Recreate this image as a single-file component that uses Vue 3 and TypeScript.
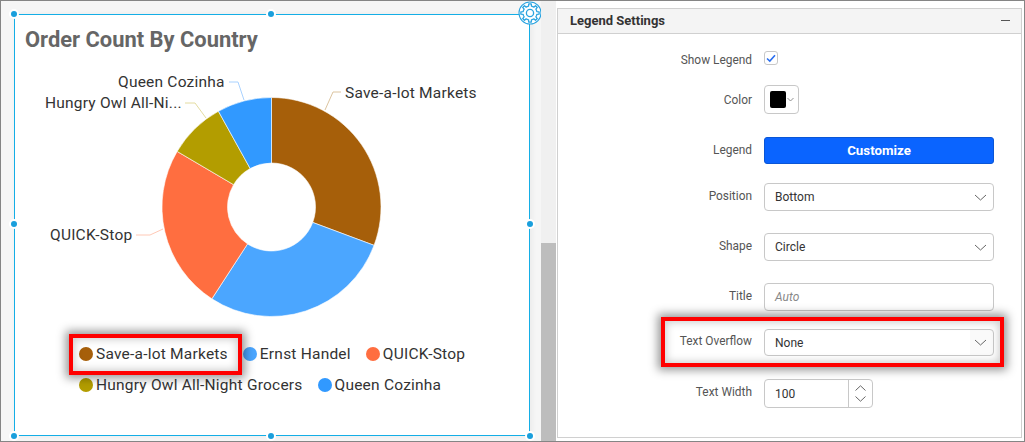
<script setup lang="ts">
const cx = 271.5, cy = 207, R = 109.5, r = 44
interface Slice { name: string; color: string; from: number; to: number }
const slices: Slice[] = [
  { name: 'Save-a-lot Markets', color: '#a65f0a', from: 0, to: 110.5 },
  { name: 'Ernst Handel', color: '#4ba6ff', from: 110.5, to: 213 },
  { name: 'QUICK-Stop', color: '#ff6e40', from: 213, to: 300.5 },
  { name: 'Hungry Owl All-Night Grocers', color: '#b39d00', from: 300.5, to: 331 },
  { name: 'Queen Cozinha', color: '#3199ff', from: 331, to: 360 },
]
function pt(rad: number, deg: number): string {
  const a = (deg - 90) * Math.PI / 180
  return `${(cx + rad * Math.cos(a)).toFixed(2)} ${(cy + rad * Math.sin(a)).toFixed(2)}`
}
function arc(s: Slice): string {
  const large = s.to - s.from > 180 ? 1 : 0
  return `M${pt(R, s.from)} A${R} ${R} 0 ${large} 1 ${pt(R, s.to)} L${pt(r, s.to)} A${r} ${r} 0 ${large} 0 ${pt(r, s.from)} Z`
}
const gear = (() => {
  const teeth = 8, c = 12, out = 9.2, inn = 7
  let d = ''
  for (let i = 0; i < teeth; i++) {
    const st = (Math.PI * 2) / teeth
    const a = i * st
    const p = [[inn, a - st * 0.5], [inn, a - st * 0.27], [out, a - st * 0.17], [out, a + st * 0.17], [inn, a + st * 0.27]]
    for (const [rad, an] of p) {
      d += `${d ? 'L' : 'M'}${(c + rad * Math.cos(an)).toFixed(2)} ${(c + rad * Math.sin(an)).toFixed(2)} `
    }
  }
  return d + 'Z'
})()
const row1 = slices.slice(0, 3)
const row2 = slices.slice(3)
</script>

<template>
  <div class="page">
    <div class="canvas">
      <section class="card">
        <h1 class="title">Order Count By Country</h1>
        <span class="handle tl"></span><span class="handle tc"></span>
        <span class="handle ml"></span><span class="handle mr"></span>
        <span class="handle bl"></span><span class="handle bc"></span><span class="handle br"></span>
      </section>
      <svg class="chart" width="540" height="300" viewBox="0 50 540 300">
        <path v-for="s in slices" :key="s.name" :d="arc(s)" :fill="s.color" stroke="#fff" stroke-width="0.6" />
        <g fill="none" stroke-width="1">
          <path d="M325 110 L333 92 H341" stroke="#dcc49f" />
          <path d="M244 100 L238 82 H229" stroke="#a9d2ff" />
          <path d="M206 118 L195 103 H185" stroke="#e4dca0" />
          <path d="M163 229 L150 235 H136" stroke="#ffc9b6" />
        </g>
        <g class="lbl">
          <text x="345" y="98">Save-a-lot Markets</text>
          <text x="118" y="87">Queen Cozinha</text>
          <text x="45" y="108">Hungry Owl All-Ni...</text>
          <text x="50" y="240">QUICK-Stop</text>
        </g>
      </svg>
      <div class="legend">
        <div class="lrow">
          <span v-for="s in row1" :key="s.name" class="litem"><i class="dot" :style="{ background: s.color }"></i>{{ s.name }}</span>
        </div>
        <div class="lrow">
          <span v-for="s in row2" :key="s.name" class="litem"><i class="dot" :style="{ background: s.color }"></i>{{ s.name }}</span>
        </div>
      </div>
      <svg class="gear" width="24" height="24" viewBox="0 0 24 24" fill="none" stroke="#2ba4e0" stroke-width="1.3">
        <circle cx="12" cy="12" r="11" fill="#fff" stroke-width="1.1" />
        <path :d="gear" stroke-linejoin="round" />
        <circle cx="12" cy="12" r="3.6" />
      </svg>
      <div class="mark mark-legend"></div>
    </div>
    <div class="scroll"><div class="thumb"></div></div>
    <aside class="panel">
      <header class="phead"><span>Legend Settings</span><i class="minus"></i></header>
      <div class="form">
        <div class="row r-show">
          <label>Show Legend</label>
          <span class="check">
            <svg width="10" height="9" viewBox="0 0 10 9" fill="none" stroke="#2a6ff0" stroke-width="1.6"><path d="M1 4.5 L3.8 7 L9 1.2" /></svg>
          </span>
        </div>
        <div class="row r-color">
          <label>Color</label>
          <span class="color"><i class="swatch"></i>
            <svg width="7" height="5" viewBox="0 0 7 5" fill="none" stroke="#777" stroke-width="0.8"><path d="M0.5 1 L3.5 4 L6.5 1" /></svg>
          </span>
        </div>
        <div class="row r-btn">
          <label class="up">Legend</label>
          <button class="btn" type="button">Customize</button>
        </div>
        <div class="row r-pos">
          <label class="up">Position</label>
          <div class="select"><span>Bottom</span><svg class="chev" width="13" height="7" viewBox="0 0 13 7" fill="none" stroke="#666"><path d="M1 1 L6.5 6 L12 1" /></svg></div>
        </div>
        <div class="row r-shape">
          <label class="up">Shape</label>
          <div class="select"><span>Circle</span><svg class="chev" width="13" height="7" viewBox="0 0 13 7" fill="none" stroke="#666"><path d="M1 1 L6.5 6 L12 1" /></svg></div>
        </div>
        <div class="row r-title">
          <label class="up">Title</label>
          <div class="select auto"><span>Auto</span></div>
        </div>
        <div class="row r-over">
          <label class="upper">Text Overflow</label>
          <div class="select short"><span>None</span><svg class="chev" width="13" height="7" viewBox="0 0 13 7" fill="none" stroke="#666"><path d="M1 1 L6.5 6 L12 1" /></svg></div>
        </div>
        <div class="row r-width">
          <label class="upper">Text Width</label>
          <div class="spin">
            <span class="val">100</span>
            <span class="arrows">
              <svg width="11" height="6" viewBox="0 0 11 6" fill="none" stroke="#666"><path d="M0.5 5.5 L5.5 0.8 L10.5 5.5" /></svg>
              <svg width="11" height="6" viewBox="0 0 11 6" fill="none" stroke="#666"><path d="M0.5 0.5 L5.5 5.2 L10.5 0.5" /></svg>
            </span>
          </div>
        </div>
      </div>
      <div class="mark mark-over"></div>
    </aside>
  </div>
</template>

<style scoped>
.page {
  width: 1025px; height: 442px; box-sizing: border-box; border: 1px solid #858585;
  display: flex; background: #fff; font-family: Roboto, "Liberation Sans", sans-serif; overflow: hidden; position: relative;
}
.canvas { width: 540px; flex: none; background: #f6f6f6; position: relative; overflow: hidden; }
.card {
  position: absolute; left: 13px; top: 13px; width: 516px; height: 422px; box-sizing: border-box;
  background: #fff; border: 1px solid #14aee6; box-shadow: 2px 0 6px rgba(0,0,0,.05); padding: 11px 10px;
}
.title { margin: 0; font-size: 21.9px; line-height: 28px; font-weight: 700; color: #666; }
.handle { position: absolute; width: 6px; height: 6px; border-radius: 50%; background: #1a9fdc; box-shadow: 0 0 0 2px #fff; }
.tl { left: -4px; top: -4px; } .tc { left: 253px; top: -4px; }
.ml { left: -4px; top: 206px; } .mr { right: -4px; top: 206px; }
.bl { left: -4px; bottom: -4px; } .bc { left: 253px; bottom: -4px; } .br { right: -4px; bottom: -4px; }
.chart { position: absolute; left: -1px; top: 49px; }
.lbl text { font-size: 15.5px; fill: #333; letter-spacing: .22px; }
.legend { position: absolute; left: 78px; top: 337px; font-size: 15.5px; letter-spacing: .22px; color: #333; }
.lrow { display: flex; gap: 15px; height: 31px; align-items: center; }
.litem { display: inline-flex; align-items: center; white-space: nowrap; }
.dot { width: 14px; height: 14px; border-radius: 50%; margin-right: 3px; }
.gear { position: absolute; left: 517px; top: 0px; }
.mark { position: absolute; border: 4px solid #f00; box-shadow: 0 0 9px 3px rgba(0,0,0,.42), inset 0 0 8px 1px rgba(0,0,0,.22); box-sizing: border-box; pointer-events: none; }
.mark-legend { left: 68px; top: 333px; width: 173px; height: 41px; }
.scroll { width: 15px; flex: none; background: #f0f0f0; position: relative; }
.thumb { position: absolute; left: 0; right: 0; top: 242px; bottom: 0; background: #bdbdbd; }
.panel { flex: 1; margin: 7px 2px 3px 1px; border: 1px solid #d0d0d0; position: relative; background: #fff; }
.phead {
  height: 25px; background: #f4f4f4; border-bottom: 1px solid #d0d0d0; display: flex; align-items: center; justify-content: space-between;
  padding: 0 11px 2px 12px; box-sizing: border-box; font-size: 13px; font-weight: 700; color: #333;
}
.minus { width: 9px; height: 1px; background: #555; }
.form { display: flex; flex-direction: column; }
.row { display: flex; align-items: center; gap: 12px; font-size: 12px; color: #555; }
.row label { width: 194px; text-align: right; flex: none; font-size: 11.9px; }
.row label.up { margin-top: -2px; }
.row label.upper { margin-top: -4px; }
.r-show { margin-top: 16px; height: 20px; }
.r-color { margin-top: 15px; height: 29px; }
.r-btn { margin-top: 23px; height: 27px; }
.r-pos { margin-top: 19px; height: 28px; }
.r-shape { margin-top: 22px; height: 28px; }
.r-title { margin-top: 22px; height: 28px; }
.r-over { margin-top: 18px; height: 27px; }
.r-width { margin-top: 23px; height: 29px; }
.check { width: 12px; height: 12px; border: 1px solid #c8c8c8; border-radius: 3px; display: flex; align-items: center; justify-content: center; margin-top: -4px; }
.color { width: 35px; height: 29px; border: 1px solid #c8c8c8; border-radius: 4px; display: flex; align-items: center; padding-left: 5px; gap: 1px; box-sizing: border-box; background: #fff; }
.swatch { width: 16px; height: 17px; background: #000; border-radius: 2px; }
.btn { width: 230px; height: 27px; border: 1px solid #0a56d6; border-radius: 3px; background: #0a64ff; color: #fff; font: 700 13.3px Roboto, sans-serif; padding: 0; }
.select {
  width: 230px; height: 100%; box-sizing: border-box; border: 1px solid #c8c8c8; border-radius: 4px; display: flex; align-items: center; justify-content: space-between;
  padding: 0 6px 0 10px; color: #333; font-size: 12px; background: #fff;
}
.short { background: linear-gradient(to left, #fafafa 23px, #fff 23px); }
.auto { color: #888; font-style: italic; }
.spin { width: 109px; height: 100%; box-sizing: border-box; border: 1px solid #c8c8c8; border-radius: 4px; display: flex; align-items: center; justify-content: space-between; color: #333; }
.val { padding-left: 10px; }
.arrows { width: 23px; height: 100%; border-left: 1px solid #c8c8c8; display: flex; flex-direction: column; align-items: center; justify-content: center; gap: 5px; }
.mark-over { left: 103px; top: 308px; width: 343px; height: 50px; }
</style>
